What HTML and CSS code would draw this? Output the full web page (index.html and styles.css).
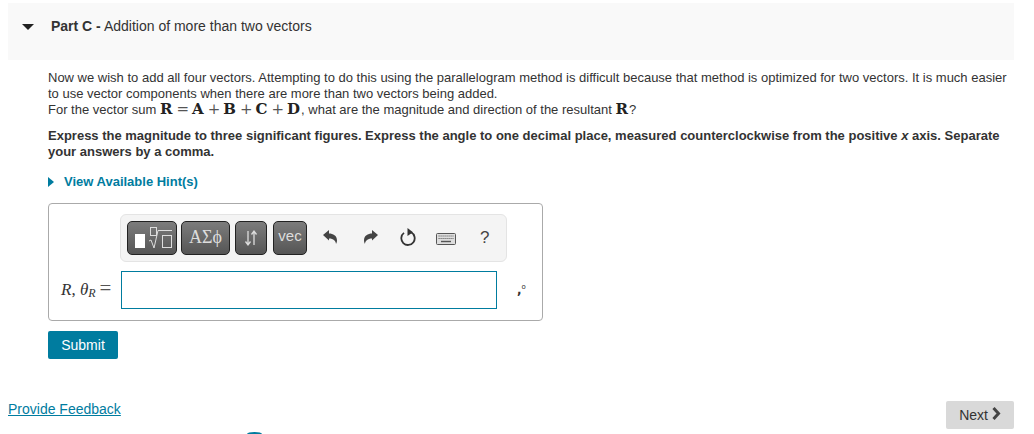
FILE: index.html
```html
<!DOCTYPE html>
<html lang="en">
<head>
  <meta charset="UTF-8">
  <title>Part C</title>
  <link rel="stylesheet" href="styles.css">
</head>
<body>
  <div class="partHeader">
    <span class="caretDown"></span>
    <div class="partTitle"><b>Part C -</b> Addition of more than two vectors</div>
  </div>

  <div class="partBody">
    <p class="intro">Now we wish to add all four vectors. Attempting to do this using the parallelogram method is difficult because that method is optimized for two vectors. It is much easier to use vector components when there are more than two vectors being added.<br>
    For the vector sum <span class="mathBold">R</span><span class="mathOp">=</span><span class="mathBold">A</span><span class="mathOp">+</span><span class="mathBold">B</span><span class="mathOp">+</span><span class="mathBold">C</span><span class="mathOp">+</span><span class="mathBold">D</span>, what are the magnitude and direction of the resultant <span class="mathBold">R</span>?</p>

    <p class="instructions">Express the magnitude to three significant figures. Express the angle to one decimal place, measured counterclockwise from the positive <i>x</i> axis. Separate your answers by a comma.</p>

    <div class="hintLink"><span class="caretRight"></span>View Available Hint(s)</div>

    <div class="answerBox">
      <div class="toolbarRow">
        <div class="toolbar">
          <div class="btnGroup">
            <button class="toolBtn templates">
              <svg width="46" height="28" viewBox="0 0 46 28">
                <rect x="6" y="10" width="10" height="14" fill="#fff"/>
                <g fill="none" stroke="#ddd" stroke-width="1">
                  <rect x="21.500" y="3.500" width="6" height="8"/>
                  <path d="M20 17l2-1 3 8 4-17.500h14"/>
                  <rect x="33.500" y="11.500" width="9" height="12"/>
                </g>
              </svg>
            </button>
            <button class="toolBtn symbols">ΑΣϕ</button>
            <button class="toolBtn arrows">
              <svg width="16" height="18" viewBox="0 0 16 18">
                <path d="M5 2v13M2.500 12.500L5 16l2.500-3.500M11 16V3M8.500 5.500L11 2l2.500 3.500" fill="none" stroke="#ddd" stroke-width="1.300"/>
              </svg>
            </button>
            <button class="toolBtn vec">vec</button>
          </div>
          <div class="iconGroup">
            <svg class="undoIcon" width="15" height="16" viewBox="0 0 15 16"><path d="M0 6L6 1v3.500c4 0 8 2 8 7 0 1.500-.5 2.500-1 3.500 0-3-2.500-5.500-7-5.500V11.500z" fill="#444"/></svg>
            <svg class="redoIcon" width="15" height="16" viewBox="0 0 15 16"><path d="M15 6L9 1v3.500c-4 0-8 2-8 7 0 1.500.5 2.500 1 3.500 0-3 2.500-5.500 7-5.500V11.500z" fill="#444"/></svg>
            <svg class="reloadIcon" width="17" height="18" viewBox="0 0 17 18"><path d="M11 4.300a6.700 6.700 0 1 1-7 .6" fill="none" stroke="#333" stroke-width="1.800"/><path d="M7.500 0l5.500 4.200-5.500 3.800z" fill="#333"/></svg>
            <svg class="keyboard" width="20" height="12" viewBox="0 0 20 12"><rect x=".5" y=".5" width="19" height="11" rx="1" fill="#ddd" stroke="#555"/><path d="M2.500 3h15M2.500 5.500h15" stroke="#666" stroke-width="1.200" stroke-dasharray="1.200 .8"/><path d="M5 8.500h10" stroke="#555" stroke-width="1.400"/></svg>
            <span class="helpMark">?</span>
          </div>
        </div>
      </div>
      <div class="inputRow">
        <div class="mathLabel"><i>R</i>, <i>θ</i><sub><i>R</i></sub><span class="eq">=</span></div>
        <div class="answerInput"></div>
        <div class="unitMark"><span>,</span><sup>o</sup></div>
      </div>
    </div>

    <button class="submitBtn">Submit</button>
  </div>

  <div class="footerRow">
    <a class="feedback" href="#">Provide Feedback</a>
    <button class="nextBtn">Next <svg width="9" height="13" viewBox="0 0 9 13"><path d="M1.500 1l5 5.500-5 5.500" fill="none" stroke="#444" stroke-width="3"/></svg></button>
  </div>
  <div class="arcPeek"></div>
</body>
</html>
```
FILE: styles.css
```css
* {
  box-sizing: border-box;
}

html, body {
  height: 434px;
  overflow: hidden;
}

body {
  margin: 0;
  padding: 3px 20px 0 8px;
  position: relative;
  font-family: "Liberation Sans", Arial, sans-serif;
  font-size: 14px;
  line-height: 16px;
  color: #333;
  background-color: #fff;
}

.partHeader {
  display: flex;
  align-items: flex-start;
  height: 57px;
  padding: 15px 0 0 14px;
  background-color: #f9f9f9;
}

.caretDown {
  width: 0;
  height: 0;
  margin-top: 6px;
  border-left: 6px solid transparent;
  border-right: 6px solid transparent;
  border-top: 6px solid #222;
}

.partTitle {
  margin-left: 17px;
}

.partBody {
  padding: 10px 0 0 40px;
  font-size: 13px;
}

p {
  margin: 0;
}

.intro {
  width: 966px;
}

.mathBold {
  font-family: "DejaVu Serif", serif;
  font-weight: bold;
  font-size: 15px;
  line-height: 0;
  letter-spacing: 1px;
  color: #222;
}

.mathOp {
  font-family: "DejaVu Serif", serif;
  font-size: 15px;
  line-height: 0;
  margin: 0 3px;
  color: #555;
}

.instructions {
  margin-top: 10px;
  font-weight: bold;
}

.hintLink {
  display: flex;
  align-items: center;
  margin-top: 14px;
  font-weight: bold;
  color: #007c9f;
}

.caretRight {
  width: 0;
  height: 0;
  margin-right: 10px;
  border-top: 5.500px solid transparent;
  border-bottom: 5.500px solid transparent;
  border-left: 6px solid #007c9f;
}

.answerBox {
  width: 495px;
  height: 118px;
  margin-top: 13px;
  border: 1px solid #aaa;
  border-radius: 4px;
}

.toolbarRow {
  padding: 10px 0 0 71px;
}

.toolbar {
  display: flex;
  align-items: center;
  width: 387px;
  height: 48px;
  padding-left: 6px;
  background-color: #f4f4f4;
  border: 1px solid #e4e4e4;
  border-radius: 6px;
}

.btnGroup {
  display: flex;
}

.toolBtn {
  height: 34px;
  padding: 0;
  color: #ddd;
  background: linear-gradient(#7c7c7c, #555);
  border: 1px solid #222;
  border-radius: 5px;
  display: flex;
  align-items: center;
  justify-content: center;
}

.templates {
  width: 50px;
}

.symbols {
  width: 49px;
  margin-left: 4px;
  padding-bottom: 2px;
  font-family: "Liberation Serif", serif;
  font-size: 18px;
}

.arrows {
  width: 32px;
  margin-left: 5px;
}

.vec {
  width: 34px;
  margin-left: 6px;
  padding-bottom: 5px;
  font-family: "Liberation Sans", sans-serif;
  font-size: 15px;
}

.iconGroup {
  display: flex;
  align-items: center;
  margin-left: 16px;
}

.undoIcon {
  margin-bottom: 2px;
}

.redoIcon {
  margin-left: 25px;
  margin-bottom: 2px;
}

.reloadIcon {
  margin-left: 22px;
  margin-bottom: 2px;
}

.keyboard {
  margin-left: 19px;
  margin-top: 2px;
}

.helpMark {
  margin-left: 24px;
  font-size: 17px;
  color: #444;
}

.inputRow {
  display: flex;
  align-items: center;
  margin-top: 9px;
}

.mathLabel {
  width: 72px;
  padding-left: 12px;
  font-family: "Liberation Serif", serif;
  font-size: 17px;
  white-space: nowrap;
}

.mathLabel sub {
  font-size: 12px;
  line-height: 0;
  vertical-align: -2px;
}

.eq {
  margin-left: 4px;
  font-size: 21px;
  line-height: 0;
  color: #555;
}

.answerInput {
  width: 376px;
  height: 38px;
  background-color: #fff;
  border: 1px solid #007c9f;
}

.unitMark {
  margin-left: 20px;
  font-family: "DejaVu Sans", sans-serif;
  font-size: 12px;
  font-weight: bold;
}

.unitMark sup {
  font-size: 7px;
  font-weight: normal;
  line-height: 0;
}

.submitBtn {
  display: block;
  width: 70px;
  height: 28px;
  margin-top: 10px;
  padding: 0;
  font-family: "Liberation Sans", sans-serif;
  font-size: 14px;
  color: #fff;
  background-color: #007c9f;
  border: none;
  border-radius: 2px;
}

.footerRow {
  display: flex;
  align-items: flex-start;
  justify-content: space-between;
  margin-top: 42px;
}

.feedback {
  color: #007c9f;
  text-decoration: underline;
}

.nextBtn {
  width: 68px;
  height: 28px;
  padding: 0;
  font-family: "Liberation Sans", sans-serif;
  font-size: 14px;
  color: #333;
  background-color: #d9d9d9;
  border: none;
  border-radius: 2px;
}

.arcPeek {
  position: absolute;
  left: 247px;
  top: 432px;
  width: 15px;
  height: 2px;
  border-radius: 50% 50% 0 0 / 100% 100% 0 0;
  background-color: #007c9f;
}
```
